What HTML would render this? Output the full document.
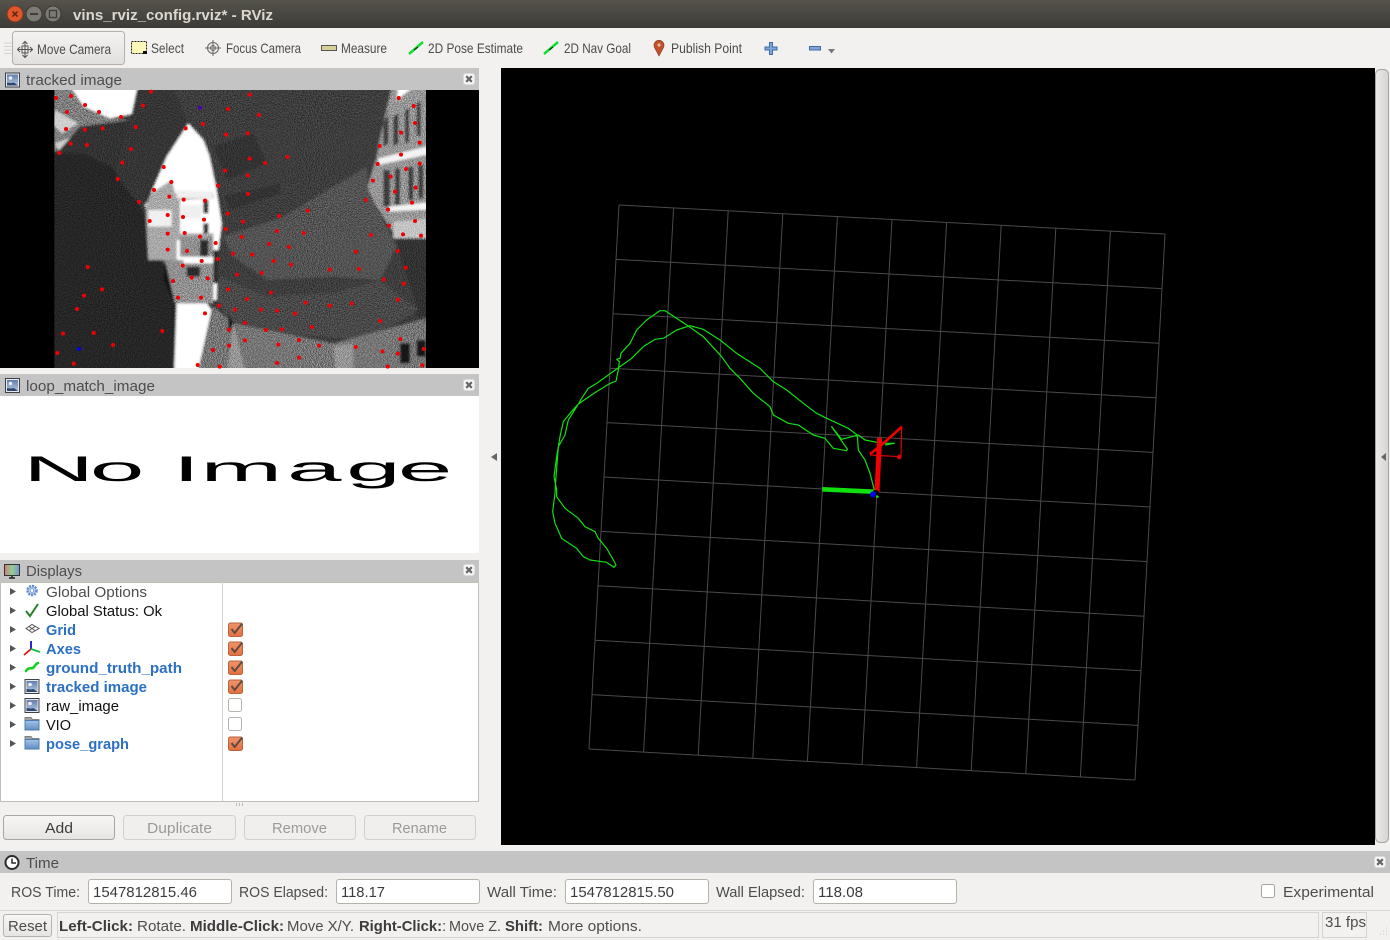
<!DOCTYPE html>
<html><head><meta charset="utf-8"><title>RViz</title>
<style>
html,body{margin:0;padding:0;background:#f2f1f0;width:1390px;height:940px;overflow:hidden}
svg{display:block;position:absolute;left:0;top:0}
text{font-family:"Liberation Sans",sans-serif;font-size:15px;fill:#3c3c3c}
.tb{font-size:14px;fill:#4c4c4c}
.pt{fill:#4d4d4d}
.bl{font-weight:bold;fill:#2b70c4}
.b{font-weight:bold}
.dis{fill:#9c9a97}
</style></head><body>
<svg width="1390" height="940" viewBox="0 0 1390 940" xmlns="http://www.w3.org/2000/svg">
<defs>
<linearGradient id="tg" x1="0" y1="0" x2="0" y2="1"><stop offset="0" stop-color="#55534c"/><stop offset="1" stop-color="#3c3b37"/></linearGradient>
<linearGradient id="bt" x1="0" y1="0" x2="0" y2="1"><stop offset="0" stop-color="#f8f7f6"/><stop offset="1" stop-color="#e6e4e2"/></linearGradient>
<linearGradient id="mv" x1="0" y1="0" x2="0" y2="1"><stop offset="0" stop-color="#f4f3f2"/><stop offset="1" stop-color="#e2e0de"/></linearGradient>
<linearGradient id="sc" x1="0" y1="0" x2="1" y2="0"><stop offset="0" stop-color="#ecebea"/><stop offset="1" stop-color="#d6d4d2"/></linearGradient>
<linearGradient id="fd" x1="0" y1="0" x2="0" y2="1"><stop offset="0" stop-color="#a3c3e6"/><stop offset="1" stop-color="#5f8fc4"/></linearGradient>
<linearGradient id="im" x1="0" y1="0" x2="0" y2="1"><stop offset="0" stop-color="#5f7fae"/><stop offset="1" stop-color="#b6c8de"/></linearGradient>
<linearGradient id="or" x1="0" y1="0" x2="0" y2="1"><stop offset="0" stop-color="#f0946a"/><stop offset="1" stop-color="#e46f3f"/></linearGradient>
<linearGradient id="mon" x1="0" y1="0" x2="1" y2="0"><stop offset="0" stop-color="#d67a7a"/><stop offset=".5" stop-color="#8fd08f"/><stop offset="1" stop-color="#7a8fd6"/></linearGradient>
<filter id="nz" x="0" y="0" width="100%" height="100%" color-interpolation-filters="sRGB"><feTurbulence type="fractalNoise" baseFrequency="0.33" numOctaves="2" seed="4"/><feColorMatrix values="0.9 0 0 0 0.05 0.9 0 0 0 0.05 0.9 0 0 0 0.05 0 0 0 0 1"/></filter>
<filter id="bl" x="-5%" y="-5%" width="110%" height="110%"><feGaussianBlur stdDeviation="3.500"/></filter>
<clipPath id="ph"><rect x="163" y="0" width="1115" height="834"/></clipPath>
<symbol id="imgi" viewBox="0 0 15 15"><rect x=".5" y=".5" width="14" height="14" fill="#e8e8ea" stroke="#3d4148"/><rect x="2" y="2" width="11" height="11" fill="url(#im)"/><circle cx="5.500" cy="5.500" r="1.800" fill="#eef"/><path d="M2 13v-3l4 .5 3 -.5 4 3z" fill="#2d4772"/></symbol>
<symbol id="fold" viewBox="0 0 15 15"><path d="M.5 1.500h6l1.500 2h6.500v10h-14z" fill="#a2a2a2" stroke="#808080"/><rect x=".5" y="4.500" width="14" height="9.500" fill="url(#fd)" stroke="#4e7cb0"/></symbol>
<symbol id="cko" viewBox="0 0 16 16"><rect x=".5" y="1" width="14" height="13.500" rx="2" fill="url(#or)" stroke="#b9633a"/><path d="M3.500 7l3.200 4 7.500 -9.500" fill="none" stroke="#5c4a40" stroke-width="1.900"/></symbol>
<symbol id="cle" viewBox="0 0 16 16"><rect x="1" y="1" width="13" height="13" rx="2" fill="#fff" stroke="#b7b2ac"/></symbol>
<symbol id="cl" viewBox="0 0 12 12"><rect x=".5" y=".5" width="11" height="11" rx="2.500" fill="#f6f6f5" stroke="#dcdcdc"/><path d="M3.200 3.200l5.600 5.600M8.800 3.200l-5.600 5.600" stroke="#666" stroke-width="2.200"/></symbol>
</defs>

<rect width="1390" height="940" fill="#f2f1f0"/>

<!-- title bar -->
<rect width="1390" height="28" fill="url(#tg)"/>
<circle cx="15" cy="14" r="8" fill="#e0582a" stroke="#7a3a22"/><path d="M12.500 11.500l5 5M17.500 11.500l-5 5" stroke="#5a2410" stroke-width="1.500"/>
<circle cx="34" cy="14" r="8" fill="#7c7a73" stroke="#3a3935"/><rect x="30" y="13" width="8" height="2" fill="#3f3e3a"/>
<circle cx="53" cy="14" r="8" fill="#7c7a73" stroke="#3a3935"/><rect x="49.500" y="10.500" width="7" height="7" fill="none" stroke="#3f3e3a" stroke-width="1.300"/>
<text x="73" y="20" textLength="200" lengthAdjust="spacingAndGlyphs" class="b" style="fill:#dcd8d0">vins_rviz_config.rviz* - RViz</text>

<!-- toolbar -->
<path d="M4 43h8M4 46.500h8M4 50h8M4 53.500h8" stroke="#d4d2cf"/>
<rect x="12.500" y="31.500" width="112" height="33" rx="3" fill="url(#mv)" stroke="#b3b0ab"/>
<g stroke="#555" fill="none"><path d="M25 42v15M18 49.500h15M22 46h6v7h-6z"/><path d="M22.500 44l2.500-2.500 2.500 2.500M22.500 55l2.500 2.500 2.500-2.500M20 47l-2.500 2.500 2.500 2.500M30 47l2.500 2.500-2.500 2.500"/></g>
<text x="37" y="54" textLength="74" lengthAdjust="spacingAndGlyphs" class="tb">Move Camera</text>
<rect x="131.500" y="41.500" width="15" height="12" fill="#fdf8b8" stroke="#222" stroke-dasharray="2 1"/><rect x="143" y="51" width="4" height="3" fill="#111"/>
<text x="151" y="53" textLength="33" lengthAdjust="spacingAndGlyphs" class="tb">Select</text>
<g fill="none" stroke="#666"><circle cx="213" cy="48" r="5.500"/><circle cx="213" cy="48" r="2.500"/><path d="M213 40v16M205 48h16"/></g>
<text x="226" y="53" textLength="75" lengthAdjust="spacingAndGlyphs" class="tb">Focus Camera</text>
<rect x="321.500" y="45.500" width="15" height="5" fill="#d9cf9a" stroke="#555"/>
<text x="341" y="53" textLength="46" lengthAdjust="spacingAndGlyphs" class="tb">Measure</text>
<path d="M409 54l14-12" stroke="#10e030" stroke-width="2.500"/><path d="M414 50l4-3" stroke="#111" stroke-width="1"/>
<text x="428" y="53" textLength="95" lengthAdjust="spacingAndGlyphs" class="tb">2D Pose Estimate</text>
<path d="M544 54l14-12" stroke="#10e030" stroke-width="2.500"/><path d="M549 50l4-3" stroke="#111" stroke-width="1"/>
<text x="564" y="53" textLength="67" lengthAdjust="spacingAndGlyphs" class="tb">2D Nav Goal</text>
<path d="M659 56l-4.500-8.500a5 5 0 1 1 9 0z" fill="#c2512a" stroke="#7a3a22" stroke-width=".6"/><circle cx="659" cy="45" r="1.600" fill="#eeb79f"/>
<text x="671" y="53" textLength="71" lengthAdjust="spacingAndGlyphs" class="tb">Publish Point</text>
<path d="M769.500 42.500h3v4.500h4.500v3h-4.500v4.500h-3v-4.500h-4.500v-3h4.500z" fill="#7fa6da" stroke="#3f6aa6"/>
<rect x="809.500" y="46.500" width="11" height="3.500" fill="#7fa6da" stroke="#3f6aa6"/>
<path d="M828 49h7l-3.500 4.500z" fill="#777"/>

<!-- tracked image panel -->
<rect x="0" y="68" width="479" height="22" fill="#c4c4c4"/>
<use href="#imgi" x="5" y="72.500" width="15" height="15"/>
<text x="26" y="85" textLength="96" lengthAdjust="spacingAndGlyphs" class="pt">tracked image</text>
<use href="#cl" x="463" y="73" width="12" height="12"/>
<rect x="0" y="90" width="479" height="278" fill="#000"/>

<g transform="translate(0,90) scale(.33333)">
<g clip-path="url(#ph)" style="isolation:isolate">
<g filter="url(#bl)">
<rect x="130" y="-30" width="1180" height="900" fill="#3a3a3a"/>
<!-- shelves right -->
<path d="M1170 -20H1300V445H1190L1100 300L1130 200Z" fill="#969696"/>
<path d="M1135 205L1300 165V190L1135 225ZM1165 350L1300 335V358L1165 365Z" fill="#f4f4f4"/>
<path d="M1150 100l15-30v90l-15 10zM1180 80l15-10v90l-15 10zM1215 60l12-5v100l-12 5zM1250 40l12-5v100l-12 5zM1150 240h20v110h-20zM1185 235h15v110h-15zM1225 230h15v100h-15zM1255 225h15v100h-15z" fill="#3c3c3c"/>
<path d="M1180 395l120-10v60h-120z" fill="#c4c4c4"/>
<path d="M1190 445H1300V680H1250Z" fill="#303030"/>
<path d="M1195 -20h60l-65 50z" fill="#fff"/>
<!-- sky -->
<path d="M200 -20H420L395 72L330 85L250 50Z" fill="#fff"/>
<path d="M140 -20H205L255 55L330 85L390 90L240 135L140 200Z" fill="#7e7e7e"/>
<path d="M165 60l70 40-50 30-30-30zM165 160l80-30 5 30-70 30z" fill="#cfcfcf"/>
<path d="M240 110L390 90L350 240L335 235L250 190L165 195Z" fill="#303030"/>
<!-- left person -->
<path d="M140 190L250 190L340 235L415 340L480 440L500 500L490 570L522 640V860H140Z" fill="#272727"/>
<!-- gap -->
<path d="M565 100L620 160L648 290L665 400L650 630H530L495 500L435 345L500 200Z" fill="#fff"/>
<path d="M445 315l70-45 10 40 115-5v20l-100 5v100h100v20H530v60H445l-8-150z" fill="#a8a8a8"/>
<path d="M530 300l110 5-3 20H530zM445 360h70v50h-70zM545 345h60v40h-60z" fill="#f0f0f0"/>
<path d="M490 510h60v130h-30zM540 440h100v60h-100zM540 520h100v80h-100zM530 600h110v40H530z" fill="#909090"/>
<path d="M495 510l30 130v220h-4V640L490 570z" fill="#151515"/>
<path d="M610 330h15v40h-15zM610 400h15v30h-15zM600 450h25v50h-25zM560 530h40v30h-40zM640 480h25v100h-25z" fill="#2a2a2a"/>
<path d="M530 640H620L635 660L590 860H522Z" fill="#fff"/>
<!-- arm -->
<path d="M415 -20H515L565 100L500 200L440 340H415L350 260L395 72Z" fill="#363636"/>
<!-- sweater -->
<path d="M515 -20H1178L1120 230L1100 300L1190 470L1255 660L1100 750L700 720L650 620L655 480L672 350L645 240L610 150L565 100Z" fill="#3c3c3c"/>
<path d="M850 380L1000 290L1100 230L1105 300L1190 470L1140 570L1000 560L800 570L700 500L670 440L700 430Z" fill="#525252"/>
<path d="M660 560L800 620L1000 610L1140 570L1255 660L1100 750L700 720L650 620Z" fill="#4a4a4a"/>
<path d="M640 170l120-40 40 90-120 50zM670 320l170-40v30l-150 50z" fill="#303030"/>
<!-- jeans -->
<path d="M640 650L700 700L1000 760L1300 680V860H590Z" fill="#747474"/>
<path d="M685 670l15 30-15 30zM1200 760h30v60h-30zM1250 750h28v50h-28z" fill="#161616"/>
<path d="M700 700l40 160H680zM1000 770l60-10v100h-50z" fill="#969696"/>
</g>
<rect x="163" y="0" width="1115" height="834" filter="url(#nz)" style="mix-blend-mode:overlay"/>
</g>
<path d="M168 24h.1M213 18h.1M255 45h.1M297 66h.1M201 66h.1M363 81h.1M198 117h.1M255 119h.1M308 115h.1M407 111h.1M429 47h.1M453 5h.1M212 161h.1M261 165h.1M178 189h.1M393 177h.1M367 218h.1M353 267h.1M491 231h.1M514 276h.1M462 300h.1M508 320h.1M417 336h.1M551 329h.1M615 332h.1M557 115h.1M609 102h.1M684 57h.1M749 14h.1M777 75h.1M678 134h.1M743 130h.1M749 206h.1M795 219h.1M862 201h.1M675 242h.1M743 256h.1M654 287h.1M744 312h.1M683 371h.1M729 395h.1M677 417h.1M725 441h.1M647 459h.1M653 507h.1M699 491h.1M757 494h.1M821 513h.1M873 524h.1M785 549h.1M711 554h.1M685 598h.1M813 608h.1M741 627h.1M705 659h.1M657 647h.1M783 659h.1M831 662h.1M885 671h.1M917 638h.1M989 647h.1M1055 641h.1M989 539h.1M1077 537h.1M1067 485h.1M1113 435h.1M1167 407h.1M1193 483h.1M1217 533h.1M1151 569h.1M1211 581h.1M1193 629h.1M1141 693h.1M1201 747h.1M1271 777h.1M1193 791h.1M1147 784h.1M1267 826h.1M1163 830h.1M1067 771h.1M957 767h.1M897 750h.1M935 711h.1M845 718h.1M797 720h.1M735 699h.1M687 719h.1M735 751h.1M687 767h.1M639 780h.1M659 830h.1M593 825h.1M835 764h.1M897 803h.1M831 819h.1M923 362h.1M837 378h.1M831 423h.1M911 429h.1M807 462h.1M867 471h.1M1097 330h.1M1119 272h.1M1133 222h.1M1139 168h.1M1196 24h.1M1241 48h.1M1245 99h.1M1203 128h.1M1259 158h.1M1203 194h.1M1259 221h.1M1218 237h.1M1172 260h.1M1247 293h.1M1185 305h.1M1236 338h.1M1164 359h.1M1245 393h.1M1209 433h.1M1263 437h.1M503 375h.1M549 381h.1M449 393h.1M612 389h.1M503 431h.1M554 429h.1M600 440h.1M503 479h.1M561 483h.1M605 513h.1M548 527h.1M519 573h.1M575 563h.1M623 565h.1M534 623h.1M603 623h.1M615 670h.1M487 723h.1M263 531h.1M306 598h.1M252 617h.1M231 657h.1M189 731h.1M281 729h.1M339 765h.1M172 789h.1M221 821h.1" stroke="#f00000" stroke-width="12" stroke-linecap="round" fill="none"/>
<path d="M237 777h.1" stroke="#0000f0" stroke-width="12" stroke-linecap="round"/>
<path d="M600 53h.1" stroke="#4a00b0" stroke-width="12" stroke-linecap="round"/>
</g>

<!-- loop match panel -->
<rect x="0" y="374" width="479" height="22" fill="#c4c4c4"/>
<use href="#imgi" x="5" y="378" width="15" height="15"/>
<text x="26" y="391" textLength="129" lengthAdjust="spacingAndGlyphs" class="pt">loop_match_image</text>
<use href="#cl" x="463" y="379" width="12" height="12"/>
<rect x="0" y="396" width="479" height="157" fill="#fff"/>
<text transform="translate(0,481) scale(2.8,1)" x="8.300 32.100 50 61.700 71.600 102.500 123.600 142.100" y="0" style="font-size:35px;fill:#000">No Image</text>

<!-- displays panel -->
<rect x="0" y="560" width="479" height="22" fill="#c4c4c4"/>
<rect x="4.500" y="564.500" width="15" height="11" fill="url(#mon)" stroke="#333"/><path d="M9 578h6M12 576v2" stroke="#222" stroke-width="1.500"/>
<text x="26" y="576" textLength="56" lengthAdjust="spacingAndGlyphs" class="pt">Displays</text>
<use href="#cl" x="463" y="564" width="12" height="12"/>
<rect x=".5" y="582.500" width="478" height="219" fill="#fff" stroke="#c2bdb7"/>
<path d="M222.500 582v219" stroke="#d3cfca"/>
<path d="M236.500 803v3M239.500 803v3M242.500 803v3" stroke="#bdb9b4"/>

<g fill="#555">
<path d="M10 588l6 3.500-6 3.500z"/><path d="M10 607l6 3.500-6 3.500z"/><path d="M10 626l6 3.500-6 3.500z"/><path d="M10 645l6 3.500-6 3.500z"/><path d="M10 664l6 3.500-6 3.500z"/><path d="M10 683l6 3.500-6 3.500z"/><path d="M10 702l6 3.500-6 3.500z"/><path d="M10 721l6 3.500-6 3.500z"/><path d="M10 740l6 3.500-6 3.500z"/>
</g>
<circle cx="32" cy="590.500" r="4.500" fill="#bcd0ee" stroke="#5d8dd0" stroke-width="2.500" stroke-dasharray="2 1"/><circle cx="32" cy="590.500" r="1.800" fill="#fff" stroke="#5d8dd0" stroke-width=".7"/>
<path d="M26 611l4 5 8-12" fill="none" stroke="#2a7d2a" stroke-width="2"/>
<path d="M26 628.500l6-4 7 4-7 4zM29 626.500l6 4M35 626.500l-6 4" fill="none" stroke="#555"/>
<path d="M31 649v-8" stroke="#1010e0" stroke-width="1.800"/><path d="M31 649l-7 6" stroke="#e01010" stroke-width="1.800"/><path d="M31 649l9 3" stroke="#10c040" stroke-width="1.800"/>
<path d="M26 671c3-5 6-1 8-4s2-3 4-4" fill="none" stroke="#10d020" stroke-width="2.500" stroke-linecap="round"/>
<use href="#imgi" x="24.500" y="679" width="15" height="15"/>
<use href="#imgi" x="24.500" y="698" width="15" height="15"/>
<use href="#fold" x="24.500" y="716" width="15" height="15"/>
<use href="#fold" x="24.500" y="735" width="15" height="15"/>

<text x="46" y="597" textLength="101" lengthAdjust="spacingAndGlyphs" class="pt">Global Options</text>
<text x="46" y="616" textLength="116" lengthAdjust="spacingAndGlyphs" style="fill:#111">Global Status: Ok</text>
<text x="46" y="635" textLength="30" lengthAdjust="spacingAndGlyphs" class="bl">Grid</text>
<text x="46" y="654" textLength="35" lengthAdjust="spacingAndGlyphs" class="bl">Axes</text>
<text x="46" y="673" textLength="136" lengthAdjust="spacingAndGlyphs" class="bl">ground_truth_path</text>
<text x="46" y="692" textLength="101" lengthAdjust="spacingAndGlyphs" class="bl">tracked image</text>
<text x="46" y="711" textLength="73" lengthAdjust="spacingAndGlyphs" style="fill:#111">raw_image</text>
<text x="46" y="730" textLength="25" lengthAdjust="spacingAndGlyphs" style="fill:#111">VIO</text>
<text x="46" y="749" textLength="83" lengthAdjust="spacingAndGlyphs" class="bl">pose_graph</text>

<use href="#cko" x="228" y="622" width="16" height="16"/>
<use href="#cko" x="228" y="641" width="16" height="16"/>
<use href="#cko" x="228" y="660" width="16" height="16"/>
<use href="#cko" x="228" y="679" width="16" height="16"/>
<use href="#cle" x="227.500" y="697.500" width="16" height="16"/>
<use href="#cle" x="227.500" y="716.500" width="16" height="16"/>
<use href="#cko" x="228" y="736" width="16" height="16"/>

<!-- buttons -->
<rect x="3.500" y="815.500" width="111" height="24" rx="3" fill="url(#bt)" stroke="#a9a6a1"/>
<text x="45" y="833" textLength="28" lengthAdjust="spacingAndGlyphs">Add</text>
<rect x="123.500" y="815.500" width="112" height="24" rx="3" fill="#f0efee" stroke="#d3d0cc"/>
<text x="147" y="833" textLength="65" lengthAdjust="spacingAndGlyphs" class="dis">Duplicate</text>
<rect x="244.500" y="815.500" width="111" height="24" rx="3" fill="#f0efee" stroke="#d3d0cc"/>
<text x="272" y="833" textLength="55" lengthAdjust="spacingAndGlyphs" class="dis">Remove</text>
<rect x="364.500" y="815.500" width="111" height="24" rx="3" fill="#f0efee" stroke="#d3d0cc"/>
<text x="392" y="833" textLength="55" lengthAdjust="spacingAndGlyphs" class="dis">Rename</text>

<!-- 3D view -->
<rect x="501" y="68" width="874" height="777" fill="#000"/>
<path d="M619 205L589 749M673.600 207.900L643.600 752.100M728.200 210.800L698.200 755.200M782.800 213.700L752.800 758.300M837.400 216.600L807.400 761.400M892 219.500L862 764.500M946.600 222.400L916.600 767.600M1001.200 225.300L971.200 770.700M1055.800 228.200L1025.800 773.800M1110.400 231.100L1080.400 776.900M1165 234L1135 780M619 205L1165 234M616 259.400L1162 288.600M613 313.800L1159 343.200M610 368.200L1156 397.800M607 422.600L1153 452.400M604 477L1150 507M601 531.400L1147 561.600M598 585.800L1144 616.200M595 640.200L1141 670.800M592 694.600L1138 725.400M589 749L1135 780" stroke="#4a4a4a" stroke-width="1" fill="none"/>
<g transform="translate(540,300) scale(.33333)">
<path d="M1003 570L990 520L975 480L955 450L952 405L925 385L860 355L830 340L790 310L740 270L700 245L660 205L590 160L540 120L490 88L450 77L410 90L370 115L345 118L310 140L275 175L240 200L205 225L170 250L145 265L125 295L115 312L90 340L70 365L60 410L50 470L42 530L50 570L50 590L75 625L115 655L135 680L165 695L175 715L200 745L220 780L228 795L222 802L200 787L150 780L130 770L110 745L65 715L45 670L38 635L45 580L48 530L55 440L75 405L85 360L115 312L165 278L205 253L228 243L235 210L238 185L230 178L240 175L243 160L270 130L290 90L320 60L360 32L375 32L440 75L490 110L545 170L570 205L600 235L640 280L690 320L700 345L745 370L775 375L820 405L855 415L880 445L920 452L922 447L875 380L905 418L955 405L975 420L1025 430L1063 430L1035 435" fill="none" stroke="#10e010" stroke-width="3.600" stroke-linejoin="round"/>
<path d="M1086 380L1030 430L990 462" fill="none" stroke="#f00000" stroke-width="8"/>
<path d="M990 465L1078 470M1085 380L1083 470" fill="none" stroke="#e00000" stroke-width="3.500"/>
<circle cx="1078" cy="471" r="7" fill="#e00000"/>
<path d="M1019 413L1011 575" stroke="#f00000" stroke-width="15"/>
<path d="M847 568L1000 575" stroke="#10e010" stroke-width="14"/>
<circle cx="1008" cy="578" r="8" fill="#000"/>
<circle cx="1012" cy="590" r="4" fill="#10e010"/>
<circle cx="999" cy="583" r="9" fill="#0000f0"/>
</g>
<rect x="1375.500" y="69.500" width="13" height="773" rx="5" fill="url(#sc)" stroke="#a8a5a0"/>
<path d="M497 453v8l-6-4z" fill="#666"/>
<path d="M1386 453v8l-5-4z" fill="#666"/>

<!-- time panel -->
<rect x="0" y="851" width="1390" height="22" fill="#c4c4c4"/>
<circle cx="12" cy="862.500" r="6.500" fill="#fff" stroke="#2c2c2c" stroke-width="2"/><path d="M12 858.500v4.500h4" fill="none" stroke="#2c2c2c" stroke-width="1.500"/>
<text x="26" y="868" textLength="33" lengthAdjust="spacingAndGlyphs" class="pt">Time</text>
<use href="#cl" x="1374" y="856" width="12" height="12"/>

<text x="11" y="897" textLength="69" lengthAdjust="spacingAndGlyphs" class="pt">ROS Time:</text>
<rect x="88.500" y="879.500" width="143" height="24" rx="2.500" fill="#fff" stroke="#b5b1ab"/>
<text x="93" y="897" textLength="104" lengthAdjust="spacingAndGlyphs">1547812815.46</text>
<text x="239" y="897" textLength="89" lengthAdjust="spacingAndGlyphs" class="pt">ROS Elapsed:</text>
<rect x="336.500" y="879.500" width="143" height="24" rx="2.500" fill="#fff" stroke="#b5b1ab"/>
<text x="341" y="897" textLength="44" lengthAdjust="spacingAndGlyphs">118.17</text>
<text x="487" y="897" textLength="70" lengthAdjust="spacingAndGlyphs" class="pt">Wall Time:</text>
<rect x="565.500" y="879.500" width="143" height="24" rx="2.500" fill="#fff" stroke="#b5b1ab"/>
<text x="570" y="897" textLength="104" lengthAdjust="spacingAndGlyphs">1547812815.50</text>
<text x="716" y="897" textLength="89" lengthAdjust="spacingAndGlyphs" class="pt">Wall Elapsed:</text>
<rect x="813.500" y="879.500" width="143" height="24" rx="2.500" fill="#fff" stroke="#b5b1ab"/>
<text x="818" y="897" textLength="45" lengthAdjust="spacingAndGlyphs">118.08</text>
<rect x="1261.500" y="884.500" width="13" height="13" rx="2" fill="#fff" stroke="#a8a5a0"/>
<text x="1283" y="897" textLength="91" lengthAdjust="spacingAndGlyphs" class="pt">Experimental</text>

<!-- status bar -->
<path d="M0 910.500H1390" stroke="#dbd9d6"/>
<rect x="3.500" y="914.500" width="48" height="22" rx="2.500" fill="url(#bt)" stroke="#b5b1ab"/>
<text x="8" y="931" textLength="39" lengthAdjust="spacingAndGlyphs" class="pt">Reset</text>
<rect x="57.500" y="912.500" width="1261" height="25" fill="none" stroke="#d6d4d1"/>
<text x="59" y="931" textLength="74" lengthAdjust="spacingAndGlyphs" class="b">Left-Click:</text>
<text x="137" y="931" textLength="49" lengthAdjust="spacingAndGlyphs" class="pt">Rotate.</text>
<text x="190" y="931" textLength="94" lengthAdjust="spacingAndGlyphs" class="b">Middle-Click:</text>
<text x="287" y="931" textLength="67" lengthAdjust="spacingAndGlyphs" class="pt">Move X/Y.</text>
<text x="359" y="931" textLength="83" lengthAdjust="spacingAndGlyphs" class="b">Right-Click:</text>
<text x="442" y="931" class="pt">:</text>
<text x="449" y="931" textLength="52" lengthAdjust="spacingAndGlyphs" class="pt">Move Z.</text>
<text x="505" y="931" textLength="38" lengthAdjust="spacingAndGlyphs" class="b">Shift:</text>
<text x="548" y="931" textLength="94" lengthAdjust="spacingAndGlyphs" class="pt">More options.</text>
<rect x="1322.500" y="912.500" width="44" height="25" fill="none" stroke="#d6d4d1"/>
<text x="1325" y="927" textLength="41" lengthAdjust="spacingAndGlyphs" class="pt">31 fps</text>
<path d="M1386 928h1M1383 931h1M1386 931h1M1380 934h1M1383 934h1M1386 934h1" stroke="#c8c6c3"/>
</svg>
</body></html>
